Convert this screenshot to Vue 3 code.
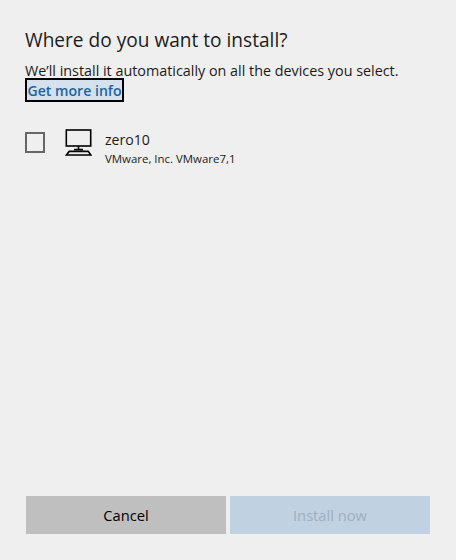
<script setup>
const device = { name: 'zero10', model: 'VMware, Inc. VMware7,1' }
</script>

<template>
  <div class="dialog">
    <h1 class="title">Where do you want to install?</h1>
    <p class="lead">We’ll install it automatically on all the devices you select.</p>
    <a class="more">Get more info</a>
    <div class="device">
      <span class="check"></span>
      <svg class="pc" width="28" height="27" viewBox="0 0 28 27" fill="none" stroke="#000" stroke-width="1.6">
        <rect x="1.3" y="1" width="24.4" height="16" />
        <path d="M13.5 17v4M9 20.6h9" />
        <path d="M4.2 22.4h19l2.6 3.6H1.4z" />
      </svg>
      <div class="info">
        <div class="name">{{ device.name }}</div>
        <div class="model">{{ device.model }}</div>
      </div>
    </div>
    <div class="actions">
      <button class="btn cancel">Cancel</button>
      <button class="btn install">Install now</button>
    </div>
  </div>
</template>

<style>
html, body { margin: 0; background: #efefef; }
</style>

<style scoped>
.dialog {
  box-sizing: border-box;
  width: 456px;
  height: 560px;
  background: #efefef;
  padding: 27px 26px 26px 25px;
  display: flex;
  flex-direction: column;
  align-items: flex-start;
  font-family: "Open Sans", "Noto Sans", sans-serif;
  color: #1b1b1b;
}
.title {
  margin: 0;
  font-size: 19.1px;
  line-height: 26px;
  font-weight: 400;
}
.lead {
  margin: 10px 0 -1px;
  font-size: 14.35px;
  line-height: 16px;
  white-space: nowrap;
}
.more {
  box-sizing: border-box;
  height: 24px;
  width: 99px;
  padding: 0;
  border: 2px solid #000;
  background: #d5e2ee;
  color: #1c63a3;
  font-size: 14.1px;
  font-weight: 600;
  line-height: 21px;
  text-align: center;
  white-space: nowrap;
}
.device {
  margin-top: 27px;
  display: flex;
  align-items: flex-start;
}
.check {
  box-sizing: border-box;
  width: 20px;
  height: 21px;
  margin-top: 3px;
  border: 2px solid #666;
}
.pc {
  margin-left: 20px;
}
.info {
  margin-left: 12px;
}
.name {
  font-size: 14.1px;
  line-height: 20px;
  margin-top: 1px;
}
.model {
  font-size: 11.45px;
  line-height: 16px;
  margin-top: 1px;
  white-space: nowrap;
}
.actions {
  margin-top: auto;
  display: flex;
  gap: 4px;
  margin-left: 1px;
}
.btn {
  width: 200px;
  height: 38px;
  border: 0;
  padding: 0;
  font-family: inherit;
  font-size: 14.7px;
}
.cancel {
  background: #bfbfbf;
  color: #000;
  font-weight: 500;
}
.install {
  background: #c0d1e2;
  color: #9fafc0;
}
</style>
